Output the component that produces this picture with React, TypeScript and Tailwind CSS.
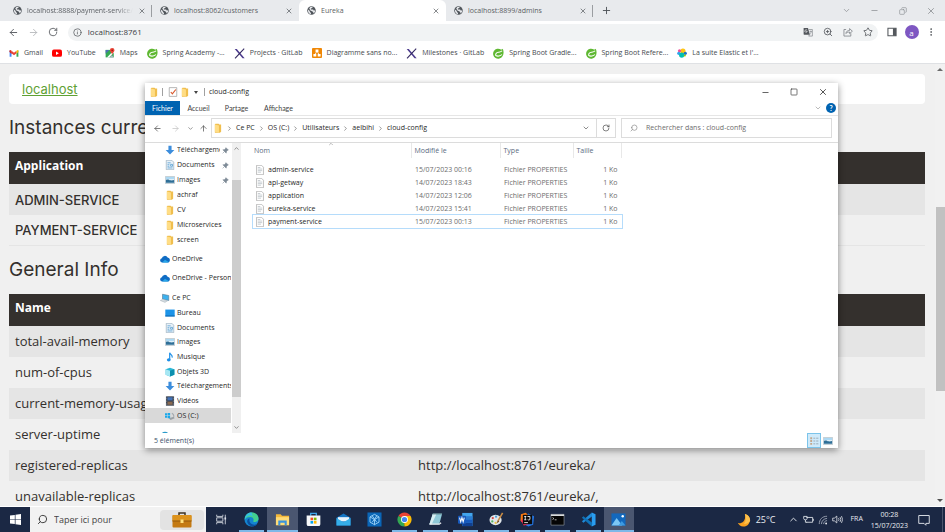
import type { ReactNode } from "react";
import clsx from "clsx";
import {
  ArrowLeft,
  ArrowRight,
  ArrowUp,
  ChevronDown,
  ChevronRight,
  ChevronUp,
  Copy,
  Info,
  Minus,
  MoreVertical,
  Plus,
  RotateCw,
  Search,
  Square,
  Star,
  X,
  ZoomIn,
} from "lucide-react";

function Svg({ className = "size-[10px]", children }: { className?: string; children: ReactNode }) {
  return (
    <svg viewBox="0 0 16 16" fill="none" aria-hidden="true" className={clsx("shrink-0", className)}>
      {children}
    </svg>
  );
}

/* ---------- browser icons ---------- */

function Globe() {
  return (
    <Svg className="size-[9px]">
      <circle cx="8" cy="8" r="7.6" fill="#50555b" />
      <path d="M1.6 6.2 5 9v1.6l2 1.2v2.8C3.400 14 1.300 11 1.600 6.200zM6 1.600l4-.4-.6 2.200-2.600 1v2h4l1.600 2 2.200-1.200c.4 2.600-1 5-3 6.200l-.6-2.600-2-1.400-3-1.200L5 6.400 4 4z" fill="#e8eaed" />
    </Svg>
  );
}

const gmail = (
  <Svg>
    <path d="M1 3.500V14h3V7.500z" fill="#4285f4" />
    <path d="M15 3.500V14h-3V7.500z" fill="#34a853" />
    <path d="M1 3.800 4 6v3L1 6.500z" fill="#c5221f" />
    <path d="M4 4.500 8 7.600l4-3.100v4L8 11.600 4 8.500z" fill="#ea4335" />
    <path d="M12 4.500 14 3q1 .2 1 1.500v2L12 9z" fill="#fbbc04" />
    <path d="M4 4.500 2.400 3Q1 3 1 4.500v2L4 9z" fill="#d93025" />
  </Svg>
);

const youtube = (
  <Svg>
    <rect x="0" y="2.500" width="16" height="11.500" rx="3" fill="#f00" />
    <path d="m6.400 5.500 4.600 2.750-4.600 2.750z" fill="#fff" />
  </Svg>
);

const maps = (
  <Svg>
    <path d="M1 3h13v12H1z" fill="#34a853" />
    <path d="M1 9 7 3H1z" fill="#4f6fb5" />
    <path d="M3 15 14 4v3.500L6.500 15z" fill="#fff" />
    <path d="m7 15 4-4 3 4z" fill="#a9b7c6" />
    <path d="M11.500 0A3.700 3.700 0 0 0 7.800 3.700c0 2.600 3 3.500 3.700 7 .7-3.500 3.700-4.400 3.700-7A3.700 3.700 0 0 0 11.500 0z" fill="#ea4335" />
    <circle cx="11.500" cy="3.700" r="1.300" fill="#8c1a12" />
  </Svg>
);

const spring = (
  <Svg className="size-[11px]">
    <path d="M14.300 1c1.500 4.500 1.500 8-.5 11A7.300 7.300 0 1 1 11.500 2.300Q13.300 2.300 14.300 1z" fill="#5fb832" />
    <path d="M13.300 4c-1.500 2-3.500 2-5.500 2.300C5 6.700 3.300 8.500 4 11c2.500 1.500 7 .8 9-1.500" stroke="#fff" strokeWidth="1.500" />
  </Svg>
);

const gitlabX = (
  <Svg className="size-[11px]">
    <path d="M1 1.500h3L15.500 15h-3z" fill="#4b3a8c" />
    <path d="M14.800 1 1.500 15" stroke="#31255f" strokeWidth="1.500" />
  </Svg>
);

const drawio = (
  <Svg>
    <rect width="16" height="16" rx="1.500" fill="#f08705" />
    <path d="M8 5 4.500 11M8 5l3.500 6" stroke="#fff" strokeWidth="1.300" />
    <path d="M5.700 2.500h4.600v3.800H5.700zM2.300 9.700h4.500v3.800H2.300zM9.200 9.700h4.500v3.800H9.200z" fill="#fff" />
  </Svg>
);

const elastic = (
  <Svg>
    <circle cx="9.500" cy="5" r="4.200" fill="#fec514" />
    <circle cx="4" cy="4.500" r="2.500" fill="#f04e98" />
    <circle cx="2.800" cy="8.500" r="2.600" fill="#36a2ef" />
    <circle cx="13.200" cy="8.500" r="2.700" fill="#1b70c9" />
    <circle cx="7.500" cy="11.300" r="4.200" fill="#00bfb3" />
    <circle cx="12.500" cy="12" r="1.700" fill="#93c90e" />
  </Svg>
);

/* ---------- explorer icons ---------- */

const folder = (
  <Svg>
    <path d="M4 1h5l1 1.500h3V14l-2 1.500H3V2z" fill="#f0be4e" />
    <path d="M3 2.500 9.500 4v11.500L3 14z" fill="#ffdd85" />
  </Svg>
);

const checkedPage = (
  <Svg>
    <path d="M2 1h12v14H2z" fill="#fff" stroke="#8b8b8b" />
    <path d="m4.500 8 2.500 3 5.500-7" stroke="#d9582b" strokeWidth="1.800" />
  </Svg>
);

const download = (
  <Svg>
    <path d="M5.500 1h5v7H15l-7 7-7-7h4.500z" fill="#3c8ddc" />
  </Svg>
);

const documents = (
  <Svg>
    <path d="M2 .5h9L14 3.500v12H2z" fill="#e8f1f8" stroke="#8fa7b8" />
    <path d="M4 4.500h5M4 7.500h3M9 7h3v3H9zM4 10h3M4 12.700h8" stroke="#4d9ad0" strokeWidth="1.200" />
  </Svg>
);

const images = (
  <Svg>
    <path d="M.5 2.500h15v11H.5z" fill="#dff0fa" stroke="#a9b4bb" />
    <path d="M1.500 8c3-2 5 0 7 .5s4 0 6-.5v4.500h-13z" fill="#2f6f97" />
    <path d="M1.500 3.500h13V6h-13z" fill="#9fd3f2" />
  </Svg>
);

const cloud = (
  <Svg className="size-[10px]">
    <path d="M3.500 13.500a3.500 3.500 0 0 1-.6-6.900 5 5 0 0 1 9.300-.8 3.900 3.900 0 0 1 .6 7.700z" fill="#0f6cc4" />
    <path d="M3.500 13.500 8 9l6.500 4-1.700.5z" fill="#28a8ea" />
  </Svg>
);

const computer = (
  <Svg>
    <path d="m4 2 10 2v8L4 9.500z" fill="#3db1ee" stroke="#587c93" />
    <path d="m.5 12 4-2 7.500 2.500-4 2.500z" fill="#d5dde2" stroke="#9aa8b1" strokeWidth=".7" />
  </Svg>
);

const desktop = (
  <Svg>
    <path d="M.5 2.500h15v11H.5z" fill="#1c94e8" />
    <path d="M.5 12h15v1.500H.5z" fill="#0d62a8" />
  </Svg>
);

const music = (
  <Svg>
    <ellipse cx="6" cy="12.500" rx="3" ry="2.500" fill="#1e90e8" />
    <path d="M7.500 12.500V1c.5 3 5 3.500 4 8" stroke="#1e90e8" strokeWidth="1.900" />
  </Svg>
);

const cube = (
  <Svg>
    <path d="M1 3.500 8 1l7 2.500v9L8 15l-7-2.500z" fill="#2bb7d6" />
    <path d="M1 3.500 8 6v9l-7-2.500z" fill="#a6e7f3" />
    <path d="M8 6l7-2.500v9L8 15z" fill="#0d8fae" />
  </Svg>
);

const video = (
  <Svg>
    <path d="M1.500.5h13v15h-13z" fill="#39414e" />
    <path d="M4 2h8v5H4z" fill="#4272b8" />
    <path d="M4 9h8v5H4z" fill="#8a6a50" />
    <path d="M2.700 1v14M13.300 1v14" stroke="#c9ced6" strokeDasharray="1 1.500" />
  </Svg>
);

const drive = (
  <Svg>
    <path d="M6 11.500 14 9l1.500 2.500L9 14.500z" fill="#9aa0a5" />
    <path d="M0 3.500h3.500v3.300H0zM4.300 3h3.900v3.800H4.300zM0 7.600h3.500v3.300H0zM4.300 7.600h3.900v3.800H4.300z" fill="#1ba8ea" />
    <path d="M11 3.500c2 1 3.500 3 3 6" stroke="#a5abb0" strokeWidth="1.700" />
  </Svg>
);

const network = (
  <Svg>
    <circle cx="8" cy="8" r="7" fill="#2a9ac9" />
    <path d="M1 5h14v3H1z" fill="#6cc5e6" />
  </Svg>
);

const textFile = (
  <Svg>
    <path d="M2.500.5h8l3 3v12h-11z" fill="#fff" stroke="#9c9c9c" />
    <path d="M4.500 4h4M4.500 6.500h7M4.500 9h7M4.500 11.500h5" stroke="#a8b0b8" />
  </Svg>
);

const pin = (
  <Svg className="size-[7px]">
    <path d="M9 1.500 14.500 7l-1.600.6-2.900 3-.4 3.400L2 6.400 5.400 6l3-2.900zM5.500 10.500 1.500 14.500" fill="#7e8b97" stroke="#7e8b97" strokeWidth="1.300" />
  </Svg>
);

/* ---------- taskbar icons ---------- */

const taskIcon = "size-[15px]";

const taskView = (
  <Svg className="size-[11px]">
    <path d="M1 1v2.500h9V1M1 15v-2.500h9V15M1 5.500h9v5H1zM13.500 1v14" stroke="#dfe3ea" strokeWidth="1.200" />
    <path d="M12.300 5h2.400v3h-2.400z" fill="#dfe3ea" />
  </Svg>
);

const edge = (
  <Svg className={taskIcon}>
    <circle cx="8" cy="8" r="7.500" fill="#1484d0" />
    <path d="M1 6C2 2 5 .5 8 .5c5 0 7.500 3.500 7.500 6.500 0 2.500-2 3.700-4 3.700-1.500 0-2-.7-1.500-1.500.8-1.700-.5-4-3.500-4C4 5.200 2 6 1 8z" fill="#42cf8e" />
    <path d="M1 6C2 2.500 5 .5 8 .5L9.500 5C7 2.500 3 4 .7 8z" fill="#35c1e0" />
    <path d="M6 7c-1 3 1 6.500 5 6.500 1.500 0 2.700-.5 3.500-1.200-3 4.500-9.500 3.500-11-1.300C3 9 4 7.300 6 7z" fill="#0b4f9d" />
  </Svg>
);

const files = (
  <Svg className={taskIcon}>
    <path d="M1 2.500h5l1.500 1.500H15V14H1z" fill="#f5b93a" />
    <path d="M1 5.500h14V14H1z" fill="#ffdc77" />
    <path d="M3.500 9h9v5h-2.200v-2.500H5.700V14H3.500z" fill="#3a93dd" />
  </Svg>
);

const store = (
  <Svg className={taskIcon}>
    <path d="M5 4V1.500h6V4" stroke="#3fa8ea" strokeWidth="1.400" />
    <path d="M.7 3.800h14.600V13q0 2-2 2H2.700q-2 0-2-2z" fill="#f6f8fa" />
    <path d="M4.800 6h2.800v2.800H4.800z" fill="#f25022" />
    <path d="M8.400 6h2.800v2.800H8.400z" fill="#7fba00" />
    <path d="M4.800 9.600h2.800v2.800H4.800z" fill="#00a4ef" />
    <path d="M8.400 9.600h2.800v2.800H8.400z" fill="#ffb900" />
  </Svg>
);

const mail = (
  <Svg className={taskIcon}>
    <path d="M.5 6 8 1.500 15.500 6v8.500H.5z" fill="#1475c4" />
    <path d="M2 5.500h12V10H2z" fill="#e8f4fc" />
    <path d="M.5 6.500 8 11l7.500-4.500v8H.5z" fill="#35aee9" />
  </Svg>
);

const builder = (
  <Svg className={taskIcon}>
    <path d="M.5.5h15v15H.5z" fill="#0a66b7" />
    <path d="m8 2.500 4.800 2.700v5.600L8 13.500l-4.800-2.700V5.200zM3.200 5.200 8 8l4.800-2.800M8 8v5.500M5.500 4l5 7M10.500 4l-5 7" stroke="#a9dafc" strokeWidth=".9" />
  </Svg>
);

const chrome = (
  <Svg className={taskIcon}>
    <path d="M8 8 1.500 4.250A7.500 7.500 0 0 1 14.500 4.250z" fill="#ea4335" />
    <path d="M8 8 1.500 4.250A7.500 7.500 0 0 0 8 15.500z" fill="#34a853" />
    <path d="M8 8h-.5L8 15.500a7.500 7.500 0 0 0 6.500-11.250H8z" fill="#fbbc04" />
    <circle cx="8" cy="8" r="3.700" fill="#fff" />
    <circle cx="8" cy="8" r="2.800" fill="#4285f4" />
  </Svg>
);

const notepad = (
  <Svg className={taskIcon}>
    <path d="M5 2h10l-3 11H1.500z" fill="#8fc9d8" />
    <path d="m5 2 4 0-5 11H1.500z" fill="#d6eef2" />
    <path d="M1.500 13H12l2-1.500" stroke="#e9edf0" strokeWidth="1.300" />
    <path d="M5 1.800h10" stroke="#557884" strokeWidth="1.500" />
  </Svg>
);

const word = (
  <Svg className={taskIcon}>
    <path d="M4.500 1h11v14h-11z" fill="#41a5ee" />
    <path d="M4.500 4.500h11V8h-11z" fill="#2b7cd3" />
    <path d="M4.500 8h11v3.500h-11z" fill="#185abd" />
    <path d="M4.500 11.500h11V15h-11z" fill="#103f91" />
    <rect x="0" y="4" width="8.500" height="8.500" rx="1" fill="#185abd" />
    <path d="m1.700 6 1.200 4.500L4.200 6l1.300 4.500L6.700 6" stroke="#fff" strokeWidth="1.100" />
  </Svg>
);

const paint = (
  <Svg className={taskIcon}>
    <ellipse cx="7" cy="8.500" rx="6.500" ry="5.500" fill="#dfe5e9" />
    <circle cx="4" cy="6.500" r="1.200" fill="#d64541" />
    <circle cx="7.500" cy="5" r="1.200" fill="#4a9ddb" />
    <circle cx="3.500" cy="10" r="1.200" fill="#57b560" />
    <circle cx="7" cy="11.500" r="1.200" fill="#eac33f" />
    <path d="M14.500 1 9 10.500" stroke="#c98c45" strokeWidth="1.700" />
    <path d="m9.800 9-2 3.500 3.200-2.500z" fill="#6b4a2b" />
  </Svg>
);

const intellij = (
  <Svg className={taskIcon}>
    <path d="M1 2.500 6 .8l4 3.500-6 8-3.500-3z" fill="#f97a12" />
    <path d="M8.500 1.500 15 4.500l-1 9-5 2-4-2z" fill="#2478e8" />
    <path d="m1 9 3 5.500L9 13 5 6z" fill="#fe315d" />
    <path d="M3 3h10v10H3z" fill="#0b0b0b" />
    <path d="M4.500 4.800h2.200M5.600 4.800v3.500M4.500 8.300h2.200M8 4.800h2.600v2.700q0 1-1.200 1-.8 0-1.200-.5M4.500 11.300h4" stroke="#fff" strokeWidth=".9" />
  </Svg>
);

const terminal = (
  <Svg className={taskIcon}>
    <path d="M1 2.500h14v11.500H1z" fill="#050505" stroke="#8d949c" strokeWidth=".7" />
    <path d="M1 2.500h14v1.800H1z" fill="#d9dcdf" />
    <path d="m2.700 6 1.500 1-1.500 1M5 8.300h2" stroke="#e5e5e5" strokeWidth=".8" />
  </Svg>
);

const vscode = (
  <Svg className={taskIcon}>
    <path d="M11.500.5 15.500 2.300v11.400l-4 1.800z" fill="#2a9df0" />
    <path d="M11.500.5 1 9.800l1.500 1.600L12 4.500z" fill="#1f8ad8" />
    <path d="M11.500 15.500 1 6.200l1.500-1.600L12 11.500z" fill="#0f72b8" />
  </Svg>
);

const photos = (
  <Svg className={taskIcon}>
    <path d="M.5 1.500h15v13H.5z" fill="#1268bd" />
    <path d="M.5 14.500 6 6.500l6 8z" fill="#7cc7f5" />
    <path d="m8 14.500 3.500-5 4 5z" fill="#3d9ae0" />
    <circle cx="12.500" cy="4.500" r="1.300" fill="#fff" />
  </Svg>
);

/* ---------- data ---------- */

const tabs = [
  { title: "localhost:8888/payment-service/default" },
  { title: "localhost:8062/customers" },
  { title: "Eureka", active: true },
  { title: "localhost:8899/admins" },
];

const bookmarks = [
  { icon: gmail, label: "Gmail" },
  { icon: youtube, label: "YouTube" },
  { icon: maps, label: "Maps" },
  { icon: spring, label: "Spring Academy -..." },
  { icon: gitlabX, label: "Projects · GitLab" },
  { icon: drawio, label: "Diagramme sans no..." },
  { icon: gitlabX, label: "Milestones · GitLab" },
  { icon: spring, label: "Spring Boot Gradle..." },
  { icon: spring, label: "Spring Boot Refere..." },
  { icon: elastic, label: "La suite Elastic et l'..." },
];

const generalInfo = [
  ["total-avail-memory", ""],
  ["num-of-cpus", ""],
  ["current-memory-usage", ""],
  ["server-uptime", ""],
  ["registered-replicas", "http://localhost:8761/eureka/"],
  ["unavailable-replicas", "http://localhost:8761/eureka/,"],
];

const quickAccess = [
  { icon: download, label: "Téléchargements", pinned: true },
  { icon: documents, label: "Documents", pinned: true },
  { icon: images, label: "Images", pinned: true },
  { icon: folder, label: "achraf" },
  { icon: folder, label: "CV" },
  { icon: folder, label: "Microservices" },
  { icon: folder, label: "screen" },
];

const thisPc = [
  { icon: desktop, label: "Bureau" },
  { icon: documents, label: "Documents" },
  { icon: images, label: "Images" },
  { icon: music, label: "Musique" },
  { icon: cube, label: "Objets 3D" },
  { icon: download, label: "Téléchargements" },
  { icon: video, label: "Vidéos" },
  { icon: drive, label: "OS (C:)", selected: true },
];

const crumbs = ["Ce PC", "OS (C:)", "Utilisateurs", "aelbihi", "cloud-config"];

const configFiles = [
  { name: "admin-service", date: "15/07/2023 00:16" },
  { name: "api-getway", date: "14/07/2023 18:43" },
  { name: "application", date: "14/07/2023 12:06" },
  { name: "eureka-service", date: "14/07/2023 15:41" },
  { name: "payment-service", date: "15/07/2023 00:13", selected: true },
];

const taskbarApps = [
  { name: "Affichage des tâches", icon: taskView },
  { name: "Edge", icon: edge, running: true },
  { name: "Explorateur", icon: files, running: true, active: true },
  { name: "Store", icon: store },
  { name: "Courrier", icon: mail },
  { name: "3D Builder", icon: builder },
  { name: "Chrome", icon: chrome, running: true },
  { name: "Bloc-notes", icon: notepad, running: true },
  { name: "Word", icon: word, running: true },
  { name: "Paint", icon: paint, running: true },
  { name: "IntelliJ", icon: intellij, running: true },
  { name: "Invite de commandes", icon: terminal, running: true },
  { name: "VS Code", icon: vscode, running: true },
  { name: "Photos", icon: photos, running: true, active: true },
];

/* ---------- browser ---------- */

function TabStrip() {
  return (
    <div className="flex h-[21px] items-stretch bg-[#e8eaed] pl-[5px]">
      {tabs.map((tab, i) => (
        <div
          key={tab.title}
          className={clsx(
            "flex w-[147px] items-center gap-[5px] pl-2 pr-[6px]",
            tab.active && "rounded-t-md bg-white",
          )}
        >
          <Globe />
          <span
            className={clsx(
              "flex-1 overflow-hidden text-[7px] leading-3 whitespace-nowrap text-[#5b5f64]",
              i === 0 && "[mask-image:linear-gradient(to_right,black_85%,transparent)]",
            )}
          >
            {tab.title}
          </span>
          <button aria-label="Fermer l'onglet">
            <X className="size-[8px] text-[#4d5156]" />
          </button>
          {(i === 0 || i === 3) && <span className="-mr-[6px] h-3 w-px bg-[#9a9da1]" />}
        </div>
      ))}
      <button aria-label="Nouvel onglet" className="px-2">
        <Plus className="size-[11px] text-[#4d5156]" />
      </button>
      <div className="ml-auto flex w-[113px] items-center text-[#8d9094]">
        <button aria-label="Rechercher" className="flex flex-1 justify-center">
          <ChevronDown className="size-[9px]" />
        </button>
        <button aria-label="Réduire" className="flex flex-1 justify-center">
          <Minus className="size-[9px]" />
        </button>
        <button aria-label="Restaurer" className="flex flex-1 justify-center">
          <Copy className="size-[8px] -scale-x-100" />
        </button>
        <button aria-label="Fermer" className="flex flex-1 justify-center">
          <X className="size-[10px]" />
        </button>
      </div>
    </div>
  );
}

function Toolbar() {
  return (
    <div className="flex h-[22px] items-center bg-white pl-2 pr-[9px] text-[#54585d]">
      <div className="flex w-[60px] items-center gap-[9px]">
        <button aria-label="Retour"><ArrowLeft className="size-[11px]" /></button>
        <button aria-label="Avancer"><ArrowRight className="size-[11px] text-[#b8babd]" /></button>
        <button aria-label="Actualiser"><RotateCw className="size-[10px]" /></button>
      </div>
      <div className="flex h-[17px] flex-1 items-center gap-[10px] rounded-full bg-[#f1f3f4] pl-[5px] pr-[5px]">
        <label className="flex flex-1 items-center gap-[6px]">
          <Info className="size-[9px]" />
          <input
            aria-label="Adresse"
            defaultValue="localhost:8761"
            className="w-full bg-transparent text-[8px] leading-3 text-[#3c4043] outline-none"
          />
        </label>
        <button aria-label="Traduire">
          <Svg>
            <path d="M1 1.500h7l3 11H2.500Q1 12.500 1 11z" fill="#54585d" />
            <path d="M9 4h6v10.500H9l2-2.500M10.500 7H14M12.200 6v1M13.500 7c-.5 2-1.500 3-2.500 4" stroke="#777b80" strokeWidth="1" />
            <path d="M6.500 5.200a2 2 0 1 0 .3 2H5" stroke="#fff" strokeWidth="1" />
          </Svg>
        </button>
        <button aria-label="Zoom"><ZoomIn className="size-[10px]" /></button>
        <button aria-label="Partager">
          <Svg>
            <path d="M5 4H1.500v10.500h11V10M4.500 10.500C5 7 7.500 5.500 10.500 5.500V2.500L15 6.700 10.500 10.500V8C8 8 6 9 4.500 10.500z" stroke="#777b80" strokeWidth="1.200" />
          </Svg>
        </button>
        <button aria-label="Favori"><Star className="size-[10px]" /></button>
      </div>
      <div className="flex w-[58px] items-center justify-between pl-[9px]">
        <button aria-label="Panneau latéral">
          <Svg>
            <path d="M1.500 2h13v12h-13z" stroke="#54585d" strokeWidth="1.700" />
            <path d="M9.500 2h5v12h-5z" fill="#54585d" />
          </Svg>
        </button>
        <button className="size-[14px] rounded-full bg-[#7e57c2] text-center text-[8px] leading-[13px] text-white">a</button>
        <button aria-label="Menu"><MoreVertical className="size-[10px]" /></button>
      </div>
    </div>
  );
}

function Bookmarks() {
  return (
    <nav className="flex h-[21px] items-center gap-[9px] border-b border-[#dfe1e4] bg-white pl-[9px] text-[7px] leading-[10px] whitespace-nowrap text-[#45494e]">
      {bookmarks.map((b, i) => (
        <a key={i} href="#" className="flex items-center gap-[5px]">
          {b.icon}
          {b.label}
        </a>
      ))}
    </nav>
  );
}

/* ---------- Eureka dashboard ---------- */

function Heading({ children }: { children: ReactNode }) {
  return (
    <h1 className="flex h-[48px] items-center font-[Inter,sans-serif] text-[19px] whitespace-nowrap text-[#34302d]">
      {children}
    </h1>
  );
}

const headRow = "h-[32px] bg-[#34302d] text-left text-[12px] text-white";

function Dashboard() {
  return (
    <div className="flex-1 overflow-hidden pl-[9px] pr-[10px] pt-[10px] text-[13px] leading-5 text-[#34302d]">
      <div className="flex h-[30px] items-center rounded bg-white pl-[13px] font-[Inter,sans-serif]">
        <a href="#" className="text-[#5fa134] underline">localhost</a>
      </div>

      <Heading>Instances currently registered</Heading>
      <table className="w-full">
        <thead>
          <tr className={headRow}>
            <th className="px-[6px] pb-1">Application</th>
          </tr>
        </thead>
        <tbody className="font-[Inter,sans-serif] font-medium">
          <tr className="h-[31px] bg-[#e5e5e5]">
            <td className="px-[6px]">ADMIN-SERVICE</td>
          </tr>
          <tr className="h-[30px] border-b border-[#e5e5e5]">
            <td className="px-[6px]">PAYMENT-SERVICE</td>
          </tr>
        </tbody>
      </table>

      <Heading>General Info</Heading>
      <table className="w-full table-fixed">
        <thead>
          <tr className={headRow}>
            <th className="w-[44%] px-[6px] pb-1">Name</th>
            <th />
          </tr>
        </thead>
        <tbody>
          {generalInfo.map(([name, value]) => (
            <tr key={name} className="h-[31px] odd:bg-[#e5e5e5]">
              <td className="px-[6px]">{name}</td>
              <td className="px-[6px]">{value}</td>
            </tr>
          ))}
        </tbody>
      </table>
    </div>
  );
}

function PageScrollbar() {
  return (
    <div className="flex w-[10px] flex-col items-center bg-[#f1f1f1] py-1">
      <span className="border-x-[3px] border-b-[3px] border-x-transparent border-b-[#6b6b6b]" />
      <span className="mt-[136px] h-[184px] w-[9px] bg-[#c1c1c1]" />
      <span className="mt-auto border-x-[3px] border-t-[3px] border-x-transparent border-t-[#505050]" />
    </div>
  );
}

/* ---------- explorer window ---------- */

type NavEntry = { icon: ReactNode; label: string; pinned?: boolean; selected?: boolean };

function NavItem({ item, root }: { item: NavEntry; root?: boolean }) {
  return (
    <button
      className={clsx(
        "flex min-h-0 w-full items-center gap-[2px] overflow-hidden text-left whitespace-nowrap",
        root ? "pl-[15px]" : "pl-5",
        item.selected && "bg-[#d9d9d9]",
      )}
    >
      {item.icon}
      <span className="flex-1 overflow-hidden">{item.label}</span>
      {item.pinned && <span className="pr-[2px]">{pin}</span>}
    </button>
  );
}

function NavPane() {
  return (
    <div className="flex w-[97px] shrink-0">
      <nav className="flex w-[86px] flex-col overflow-hidden">
        <div className="grid h-[104px] shrink-0 auto-rows-fr">
          {quickAccess.map((item) => (
            <NavItem key={item.label} item={item} />
          ))}
        </div>
        <div className="mt-1 mb-[6px] grid h-[34px] shrink-0 gap-1">
          <NavItem root item={{ icon: cloud, label: "OneDrive" }} />
          <NavItem root item={{ icon: cloud, label: "OneDrive - Personnel" }} />
        </div>
        <div className="grid h-[132px] shrink-0 auto-rows-fr">
          <NavItem root item={{ icon: computer, label: "Ce PC" }} />
          {thisPc.map((item) => (
            <NavItem key={item.label} item={item} />
          ))}
        </div>
        <div className="mt-2 shrink-0">
          <NavItem root item={{ icon: network, label: "Réseau" }} />
        </div>
      </nav>
      <div className="ml-px flex w-[9px] flex-col items-center bg-[#f0f0f0] text-[#505050]">
        <ChevronUp className="mt-[2px] size-[7px]" />
        <span className="mt-[28px] h-[217px] w-full bg-[#cdcdcd]" />
        <ChevronDown className="mt-auto mb-[2px] size-[7px]" />
      </div>
    </div>
  );
}

function FileList() {
  return (
    <div className="relative flex-1 pl-[11px]">
      <ChevronUp className="absolute left-[86px] top-[-2px] size-[6px] text-[#777]" />
      <table className="w-[369px] table-fixed border-collapse text-[#6d6d6d]">
        <thead>
          <tr className="h-[15px] text-left text-[#5a6b80]">
            <th className="w-[158px] border-r border-[#e8e8e8] pl-px font-normal">Nom</th>
            <th className="w-[89px] border-r border-[#e8e8e8] pl-[3px] font-normal">Modifié le</th>
            <th className="w-[73px] border-r border-[#e8e8e8] pl-[3px] font-normal">Type</th>
            <th className="border-r border-[#e8e8e8] pl-[3px] font-normal">Taille</th>
          </tr>
          <tr className="h-[5px]" />
        </thead>
        <tbody>
          {configFiles.map((f) => (
            <tr
              key={f.name}
              className={clsx("h-[13px] leading-3", f.selected && "outline outline-[#b5dcfb]")}
            >
              <td className="text-[#1f1f1f]">
                <span className="flex items-center gap-[3px] pl-[2px]">
                  {textFile}
                  {f.name}
                </span>
              </td>
              <td className="pl-1">{f.date}</td>
              <td className="pl-1 whitespace-nowrap">Fichier PROPERTIES</td>
              <td className="pr-1 text-right">1 Ko</td>
            </tr>
          ))}
        </tbody>
      </table>
    </div>
  );
}

function Explorer() {
  return (
    <section className="absolute left-[145px] right-[107px] top-[83px] flex h-[365px] flex-col bg-white text-[7px] leading-[10px] text-[#1f1f1f] shadow-[0_2px_7px_rgba(0,0,0,0.45)]">
      <header className="flex h-[18px] shrink-0 items-center pl-1 pr-px">
        {folder}
        <span className="mx-[3px] h-2 w-px bg-[#a0a0a0]" />
        <span className="ml-[2px]">{checkedPage}</span>
        <span className="ml-[2px]">{folder}</span>
        <span className="ml-[4px] border-x-[2px] border-t-[3px] border-x-transparent border-t-[#444]" />
        <span className="ml-[6px] mr-1 h-2 w-px bg-[#a0a0a0]" />
        <h2>cloud-config</h2>
        <div className="ml-auto flex w-[86px] items-center text-[#333]">
          <button aria-label="Réduire" className="flex flex-1 justify-center"><Minus className="size-[9px]" /></button>
          <button aria-label="Agrandir" className="flex flex-1 justify-center"><Square className="size-[8px]" /></button>
          <button aria-label="Fermer" className="flex flex-1 justify-center"><X className="size-[10px]" /></button>
        </div>
      </header>

      <div className="flex h-[15px] shrink-0 items-stretch border-b border-[#e6e6e6] font-[Lato,sans-serif] text-[#444]">
        <button className="w-[35px] bg-[#0063b1] text-white">Fichier</button>
        <button className="w-[37px]">Accueil</button>
        <button className="w-[39px]">Partage</button>
        <button className="w-[45px]">Affichage</button>
        <div className="ml-auto flex items-center gap-1 pr-[2px]">
          <ChevronDown className="size-[8px] text-[#999]" />
          <button className="size-[10px] rounded-full bg-[#0063b1] text-center font-bold text-white">?</button>
        </div>
      </div>

      <div className="flex h-[27px] shrink-0 items-center border-b border-[#dcdcdc] pb-[2px] pl-2 pr-[6px]">
        <div className="flex w-[58px] items-center text-[#555]">
          <button aria-label="Précédent"><ArrowLeft className="size-[9px]" /></button>
          <button aria-label="Suivant" className="ml-[9px]"><ArrowRight className="size-[9px] text-[#c4c4c4]" /></button>
          <button aria-label="Récents" className="ml-[7px]"><ChevronDown className="size-[7px]" /></button>
          <button aria-label="Dossier parent" className="ml-[5px]"><ArrowUp className="size-[9px]" /></button>
        </div>
        <div className="flex h-[20px] flex-1 items-center border border-[#dcdcdc] pl-px">
          {folder}
          <ol className="flex flex-1 items-center">
            {crumbs.map((c) => (
              <li key={c} className="flex items-center">
                <ChevronRight className="mx-[3px] size-[7px] text-[#555]" />
                <button>{c}</button>
              </li>
            ))}
          </ol>
          <button aria-label="Historique" className="px-[6px]"><ChevronDown className="size-[8px] text-[#555]" /></button>
          <button aria-label="Actualiser" className="h-full border-l border-[#dcdcdc] px-[5px]">
            <RotateCw className="size-[8px] text-[#444]" />
          </button>
        </div>
        <label className="ml-[5px] flex h-[20px] w-[211px] items-center gap-2 border border-[#dcdcdc] pl-2">
          <Search className="size-[8px] -scale-x-100 text-[#888]" />
          <input
            aria-label="Rechercher"
            placeholder="Rechercher dans : cloud-config"
            className="flex-1 outline-none placeholder:text-[#6d6d6d]"
          />
        </label>
      </div>

      <div className="flex min-h-0 flex-1">
        <NavPane />
        <FileList />
      </div>

      <footer className="flex h-[15px] shrink-0 items-center pl-[9px] text-[#3d5068]">
        5 élément(s)
        <div className="ml-auto flex items-center pr-[3px]">
          <button aria-label="Détails" className="flex h-[15px] w-[14px] items-center justify-center border border-[#7cc4ea] bg-[#cfeafa]">
            <Svg>
              <path d="M2 2h3v3H2zM2 6.500h3v3H2zM2 11h3v3H2z" fill="#c3a68a" />
              <path d="M7 3.500h3M11.500 3.500H15M7 8h3M11.500 8H15M7 12.500h3M11.500 12.500H15" stroke="#8a97a3" strokeWidth="1.200" />
            </Svg>
          </button>
          <button aria-label="Grandes icônes" className="px-[2px]">{images}</button>
        </div>
      </footer>
    </section>
  );
}

/* ---------- taskbar ---------- */

function Taskbar() {
  return (
    <footer className="flex h-[26px] shrink-0 items-stretch border-t border-white bg-[#1b2844] text-[#e8ebf0]">
      <button aria-label="Démarrer" className="flex w-[30px] items-center justify-center">
        <Svg className="size-[11px]">
          <path d="M0 2.300 7 1.300v6.200H0zM8 1.200 16 0v7.500H8zM0 8.500h7v6.200l-7-1zM8 8.500h8V16l-8-1.200z" fill="#fff" />
        </Svg>
      </button>
      <label className="flex w-[176px] items-center gap-[6px] bg-[#f2f2f2] pl-[7px] pr-[2px]">
        <Search className="size-[11px] -scale-x-100 text-[#333]" />
        <input
          aria-label="Recherche"
          placeholder="Taper ici pour"
          className="w-0 flex-1 text-[9px] outline-none placeholder:text-[#444]"
        />
        <span className="flex h-[20px] w-[44px] items-center justify-center rounded bg-[#e3e3e3]">
          <svg viewBox="0 0 20 16" fill="none" className="h-[16px] w-[20px]">
            <path d="M7 3.500V1h6v2.500" stroke="#3f3222" strokeWidth="1.500" />
            <rect x=".5" y="3" width="19" height="12.500" rx="1" fill="#c47a12" />
            <path d="M.5 4q0-1 1-1h17q1 0 1 1v5H.5z" fill="#dd931c" />
            <path d="M.5 9h19" stroke="#8f560c" />
            <path d="M8.500 7.500h3v3.500h-3z" fill="#ffe07a" />
          </svg>
        </span>
      </label>
      <nav className="flex w-[428px]">
        {taskbarApps.map((app) => (
          <button
            key={app.name}
            aria-label={app.name}
            className={clsx(
              "flex flex-1 flex-col items-center pt-1",
              app.active && "bg-[#4a5670]",
            )}
          >
            <span className="flex h-[16px] items-center">{app.icon}</span>
            {app.running && (
              <span className={clsx("mt-auto h-[2px] bg-[#7db8e8]", app.active ? "w-full" : "w-[25px]")} />
            )}
          </button>
        ))}
      </nav>
      <div className="ml-auto flex items-center text-[7px]">
        <Svg className="size-[14px]">
          <path d="M9 1a7.300 7.300 0 1 1-8 10.500C6.500 12.500 10.500 8 9 1z" fill="#f9a11f" />
          <path d="M9 1c4 1 6.300 4 6 8-1.500 2-4 3.500-7 3.500C10.500 9 10.500 5 9 1z" fill="#fcc04d" />
        </Svg>
        <span className="ml-[5px] text-[9px]">25°C</span>
        <ChevronUp className="ml-[13px] size-[11px]" />
        <Svg className="ml-1 size-[11px]">
          <path d="M5 5h9v7H5M15 7v3M1 3.500h5v3q0 2-2.500 2T1 6.500zM3.500 8.500V12H6" stroke="#e8ebf0" strokeWidth="1.200" />
        </Svg>
        <Svg className="ml-1 size-[10px]">
          <path d="M2 14.500C2 7 7 2 14.500 2M5.500 14.500c0-5 4-9 9-9M9 14.500C9 11.500 11.500 9 14.500 9" stroke="#aab2c0" strokeWidth="1.300" />
          <circle cx="13" cy="13.500" r="1.500" fill="#e8ebf0" />
        </Svg>
        <Svg className="ml-1 size-[11px]">
          <path d="M1 6h2.500L7 3v10L3.500 10H1zM9.500 6q1.300 2 0 4M11.700 4.500q2.300 3.500 0 7M13.800 3q3.300 5 0 10" stroke="#e8ebf0" strokeWidth="1.100" />
        </Svg>
        <span className="ml-[7px]">FRA</span>
        <time className="ml-2 text-center leading-[11px]">
          00:28
          <br />
          15/07/2023
        </time>
        <button aria-label="Notifications" className="ml-[10px]">
          <Svg className="size-[12px]">
            <path d="M1 2h14v10.500h-4.500v2.500L8 12.500H1z" stroke="#e8ebf0" strokeWidth="1.200" />
          </Svg>
        </button>
        <span className="ml-3 mr-[2px] h-[25px] w-px bg-[#4b566d]" />
      </div>
    </footer>
  );
}

export default function App() {
  return (
    <div className="relative flex h-screen flex-col overflow-hidden bg-[#f0f0f0] font-['Open_Sans','Noto_Sans',sans-serif]">
      <TabStrip />
      <Toolbar />
      <Bookmarks />
      <main className="flex min-h-0 flex-1">
        <Dashboard />
        <PageScrollbar />
      </main>
      <Taskbar />
      <Explorer />
    </div>
  );
}
